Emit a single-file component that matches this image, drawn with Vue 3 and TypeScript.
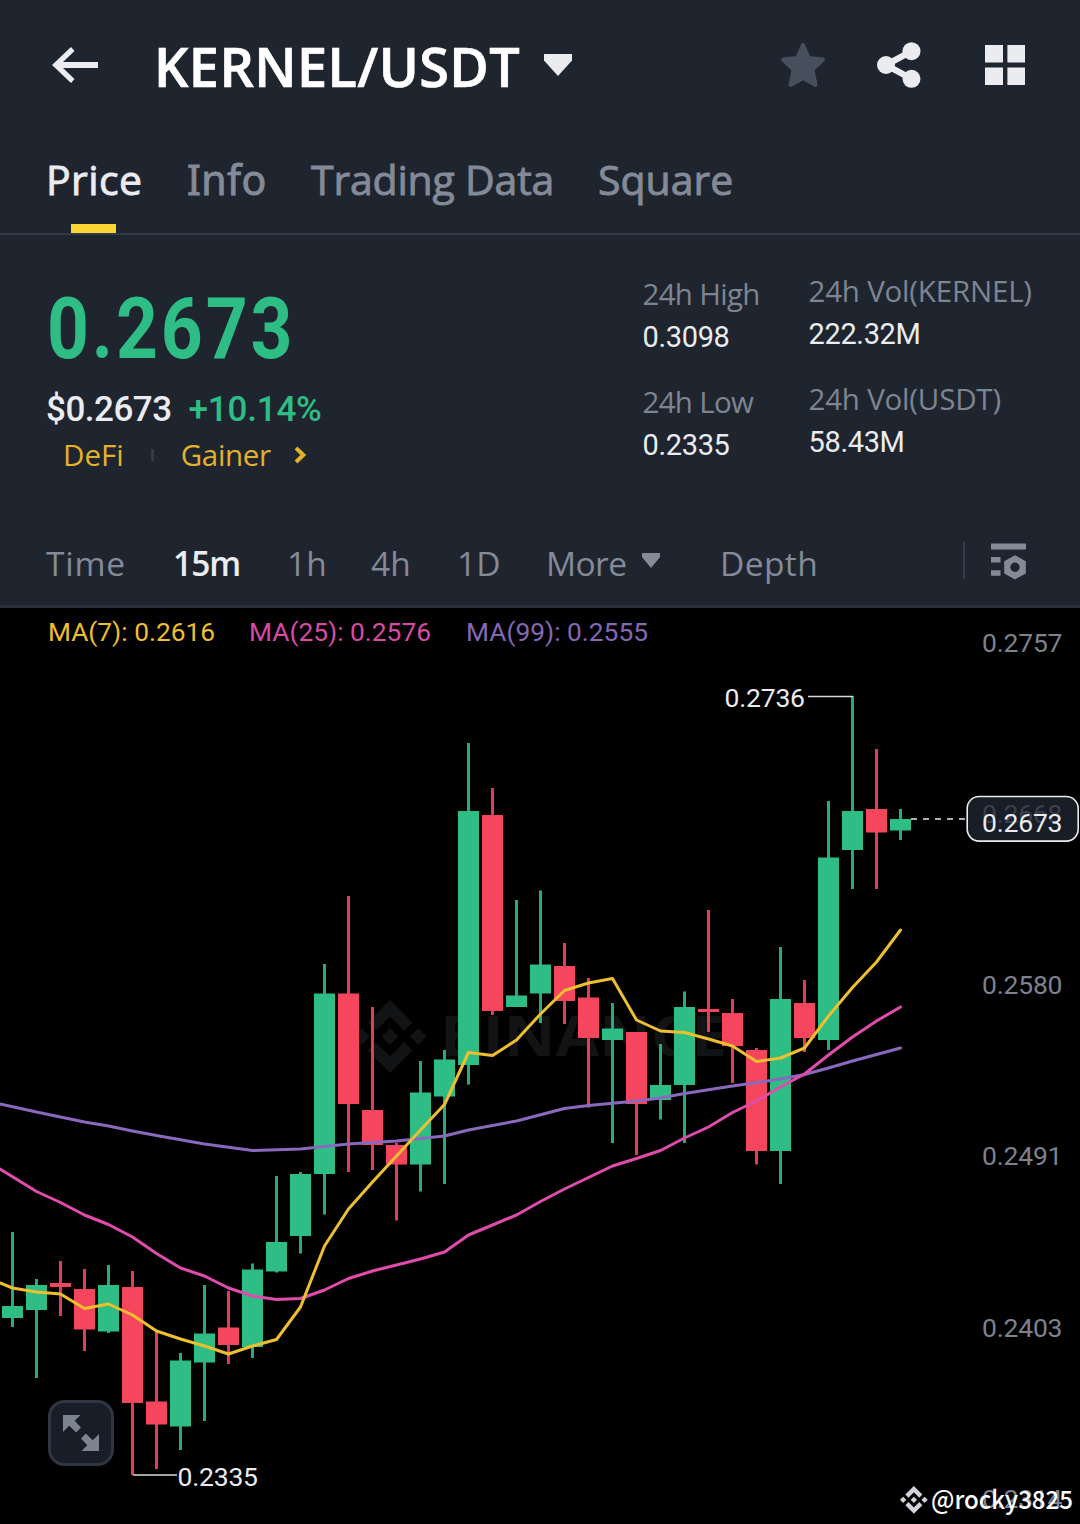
<script setup lang="ts">
interface Candle {
  x: number
  up: boolean
  high: number
  low: number
  top: number
  bottom: number
}

const tabs = [
  { label: 'Price', cls: 'price active' },
  { label: 'Info', cls: 'info' },
  { label: 'Trading Data', cls: 'data' },
  { label: 'Square', cls: 'square' },
]

const stats = [
  [
    { label: '24h High', value: '0.3098' },
    { label: '24h Low', value: '0.2335' },
  ],
  [
    { label: '24h Vol(KERNEL)', value: '222.32M' },
    { label: '24h Vol(USDT)', value: '58.43M' },
  ],
]

// Chart geometry: [rising, high, low, body top, body bottom] in canvas units
const OFFSET = 608
const raw: [number, number, number, number, number][] = [
  [1, 1232, 1327, 1306, 1318],
  [1, 1279, 1378, 1285, 1310],
  [0, 1261, 1316, 1283, 1287],
  [0, 1269, 1351, 1289, 1329.5],
  [1, 1265, 1333, 1285, 1331.5],
  [0, 1271, 1475, 1287, 1403],
  [0, 1332, 1469, 1401.5, 1424.5],
  [1, 1353, 1450, 1360.5, 1426.5],
  [1, 1285, 1421, 1333.5, 1362.5],
  [0, 1291, 1364, 1327.5, 1345],
  [1, 1263.5, 1358, 1269.5, 1347],
  [1, 1176, 1272.5, 1242, 1271.5],
  [1, 1172, 1253.5, 1174, 1236],
  [1, 964, 1214.5, 993.5, 1174],
  [0, 896, 1172, 993.5, 1104],
  [0, 1007, 1170, 1110, 1145],
  [0, 1143, 1220.5, 1145, 1164.5],
  [1, 1061, 1191.5, 1092.5, 1164.5],
  [1, 1050, 1184, 1059.5, 1096.5],
  [1, 743, 1084.5, 811, 1065],
  [0, 788, 1015, 815, 1011],
  [1, 900, 1007, 995.5, 1007],
  [1, 890.5, 1023, 964.5, 993.5],
  [0, 943, 1024, 966, 1001],
  [0, 978, 1107.5, 997.5, 1038],
  [1, 1003, 1143, 1028.5, 1040],
  [0, 1032, 1155, 1032, 1104],
  [1, 1044, 1119.5, 1085, 1100],
  [1, 991.5, 1143, 1007, 1085],
  [0, 910, 1032, 1009, 1012],
  [0, 999, 1083, 1013, 1046],
  [0, 1048, 1164.5, 1050, 1151],
  [1, 947, 1184, 999, 1151],
  [0, 980, 1052, 1003, 1038],
  [1, 801, 1050, 857.5, 1040],
  [1, 696, 889, 811, 850],
  [0, 749, 889, 809, 832.5],
  [1, 809, 840, 819, 830.5],
]
const candles: Candle[] = raw.map(([up, high, low, top, bottom], i) => ({
  x: 12.5 + 24 * i,
  up: up === 1,
  high: high - OFFSET,
  low: low - OFFSET,
  top: top - OFFSET,
  bottom: bottom - OFFSET,
}))

const toPath = (points: number[][]): string =>
  points.map(([x, y]) => `${x},${y - OFFSET}`).join(' ')

const spread = (start: number, values: number[]): number[][] =>
  values.map((y, i) => [start + 24 * i, y])

const ma7 = toPath([
  [0, 1283],
  ...spread(12.5, [
    1288, 1292, 1294, 1308.5, 1304, 1315, 1331, 1339, 1346, 1354, 1346, 1339.5, 1307, 1246, 1209,
    1182, 1156, 1130, 1104.5, 1052.5, 1055.5, 1040, 1014, 990.5, 983, 978.5, 1020, 1031, 1032.5,
    1039, 1046, 1061.5, 1058, 1048, 1016, 987.5, 962, 930,
  ]),
])
const ma25 = toPath([
  [0, 1169],
  ...spread(36.5, [
    1191.5, 1202.5, 1215, 1224.5, 1237, 1253.5, 1268, 1276, 1288, 1296, 1299.5, 1298.5, 1290, 1278.5,
    1271, 1265, 1259, 1252, 1235, 1225, 1215, 1201.5, 1189, 1177.5, 1166, 1158.5, 1150.5, 1138, 1127,
    1112.5, 1101, 1087, 1074, 1055, 1037, 1021, 1007,
  ]),
])
const ma99 = toPath([
  [0, 1104], [36.5, 1112], [84.5, 1122], [108.5, 1126], [132.5, 1131], [156.5, 1135.5], [204.5, 1144],
  [252.5, 1150.5], [300.5, 1149], [324.5, 1146.5], [348.5, 1144], [396.5, 1141], [444.5, 1136],
  [468.5, 1130], [516.5, 1121], [564.5, 1108.5], [588.5, 1105.5], [636.5, 1101], [660.5, 1098],
  [684.5, 1093.5], [732.5, 1086], [780.5, 1079], [804.5, 1074.5], [828.5, 1068], [852.5, 1061],
  [876.5, 1054.5], [900.5, 1048],
])

const axis = [
  { t: '0.2757', y: 44 },
  { t: '0.2580', y: 386 },
  { t: '0.2491', y: 557 },
  { t: '0.2403', y: 729 },
  { t: '0.2314', y: 900 },
]
const averages = [
  { t: 'MA(7): 0.2616', x: 48, w: 167, cls: 'c7' },
  { t: 'MA(25): 0.2576', x: 249, w: 182, cls: 'c25' },
  { t: 'MA(99): 0.2555', x: 466, w: 182, cls: 'c99' },
]

const logo =
  'M38.73,53.2 63.3,28.63 87.89,53.21 102.19,38.91 63.31,0 24.43,38.9Z M0,63.31 14.3,49 28.6,63.31 14.3,77.61Z M38.73,73.41 63.3,98 87.89,73.4 102.2,87.69 63.31,126.61 24.43,87.72Z M98,63.31 112.3,49 126.61,63.3 112.31,77.6Z M77.82,63.3 63.3,48.78 48.78,63.3 63.28,77.8Z'
</script>

<template>
  <div class="screen">
    <header class="topbar">
      <svg class="back" width="46" height="36" viewBox="0 0 46 36">
        <path d="M19 0 0 18 19 36 22.5 32 11 21H46V15H11L22.5 4Z" />
      </svg>
      <h1>KERNEL/USDT</h1>
      <svg class="caret" width="28" height="22" viewBox="0 0 28 22">
        <path d="M0 0H28V6.5L14 22 0 6.5Z" />
      </svg>
      <svg class="star" width="46" height="46" viewBox="0 0 46 46">
        <path d="M23 3 28.8 16 43 17.5 32.4 27.5 35.5 43 23 36 10.5 43 13.6 27.5 3 17.5 17.2 16Z" />
      </svg>
      <svg class="share" width="44" height="46" viewBox="0 0 44 46">
        <path d="M35 9 9 23 35 37" />
        <circle cx="9" cy="23" r="9" />
        <circle cx="34.5" cy="9.2" r="9" />
        <circle cx="34.5" cy="36.8" r="9" />
      </svg>
      <svg class="apps" width="40" height="40" viewBox="0 0 40 40">
        <path d="M0 0H18V17.6H0ZM22.4 0H40V17.6H22.4ZM0 22.4H18V40H0ZM22.4 22.4H40V40H22.4Z" />
      </svg>
    </header>

    <nav class="tabs">
      <a v-for="t in tabs" :key="t.label" class="tab" :class="t.cls">{{ t.label }}</a>
    </nav>

    <section class="summary">
      <div class="quote">
        <div class="last">0.2673</div>
        <div class="sub">
          <span class="fiat">$0.2673</span>
          <span class="gain">+10.14%</span>
        </div>
        <div class="tags">
          <span>DeFi</span>
          <i></i>
          <span class="gainer">Gainer</span>
          <svg width="13" height="18" viewBox="0 0 13 18"><path d="M2 2 9.3 9 2 16" /></svg>
        </div>
      </div>
      <dl v-for="(col, c) in stats" :key="c" class="stats" :class="c ? 'vol' : 'range'">
        <div v-for="s in col" :key="s.label" class="stat">
          <dt>{{ s.label }}</dt>
          <dd>{{ s.value }}</dd>
        </div>
      </dl>
    </section>

    <nav class="intervals">
      <span class="i-time">Time</span>
      <span class="i-15 on">15m</span>
      <span class="i-1h">1h</span>
      <span class="i-4h">4h</span>
      <span class="i-1d">1D</span>
      <span class="i-more">More</span>
      <svg class="drop" width="18" height="15" viewBox="0 0 18 15"><path d="M0 0H18V4L9 15 0 4Z" /></svg>
      <span class="i-depth">Depth</span>
      <i class="rule"></i>
      <svg class="prefs" width="36" height="37" viewBox="0 0 36 37">
        <path d="M0 .5H35V6.5H0ZM0 14H9.5V19.5H0ZM0 27.2H9.5V32.8H0Z" />
        <path
          fill-rule="evenodd"
          d="M24 12.2 34.8 18.2V30.4L24 36.4 13.2 30.4V18.2ZM24 19.6A4.7 4.7 0 1 0 24 29A4.7 4.7 0 1 0 24 19.6Z"
        />
      </svg>
    </nav>

    <main class="chart">
      <svg width="1080" height="916" viewBox="0 0 1080 916">
        <g class="watermark">
          <path :d="logo" transform="translate(353.5 392) scale(.577)" />
          <text x="440" y="448" textLength="287" lengthAdjust="spacingAndGlyphs">BINANCE</text>
        </g>

        <g v-for="c in candles" :key="c.x" :class="c.up ? 'up' : 'down'">
          <rect class="wick" :x="c.x - 1.5" :y="c.high" width="3" :height="c.low - c.high" />
          <rect :x="c.x - 10.5" :y="c.top" width="21" :height="c.bottom - c.top" />
        </g>

        <g class="lines">
          <polyline class="l99" :points="ma99" />
          <polyline class="l25" :points="ma25" />
          <polyline class="l7" :points="ma7" />
        </g>

        <text
          v-for="a in averages"
          :key="a.t"
          :class="a.cls"
          :x="a.x"
          y="33"
          :textLength="a.w"
          lengthAdjust="spacingAndGlyphs"
        >{{ a.t }}</text>

        <text v-for="a in axis" :key="a.t" class="axis" x="982" :y="a.y" textLength="80.5">{{ a.t }}</text>

        <path class="pointer" d="M808 88.5H853M133 867H177" />
        <text class="mark" x="724.5" y="99" textLength="80.5">0.2736</text>
        <text class="mark" x="177.5" y="878" textLength="80.5">0.2335</text>

        <path class="dash" d="M911 211H966" />
        <rect class="bubble" x="967.2" y="188.5" width="111" height="44.6" rx="12" />
        <text class="ghost" x="982" y="215" textLength="80.5">0.2668</text>
        <text class="mark" x="982" y="224" textLength="80.5">0.2673</text>

        <g class="expand">
          <rect x="49.5" y="793.5" width="63" height="63" rx="15" />
          <path d="M63 807H80.5L74.7 812.8 81 819.5 76.2 824.5 69.2 817.8 63 824Z" />
          <path d="M99 843H81.5L87.3 837.2 81 830.5 85.8 825.5 92.8 832.2 99 826Z" />
        </g>

        <g class="author">
          <path :d="logo" transform="translate(900 878) scale(.219)" />
          <text x="931" y="901" textLength="142" lengthAdjust="spacingAndGlyphs">@rocky3825</text>
        </g>
      </svg>
    </main>
  </div>
</template>

<style>
body {
  margin: 0;
  background: #000;
}
</style>

<style scoped>
.screen {
  width: 1080px;
  height: 1524px;
  overflow: hidden;
  background: #1f252f;
  color: #eaecef;
  font-family: 'Open Sans', 'Noto Sans', sans-serif;
}
svg {
  display: block;
  flex: none;
}
.topbar {
  display: flex;
  align-items: center;
  box-sizing: border-box;
  width: 1080px;
  height: 130px;
  padding: 0 55px 0 52px;
  fill: #eaecef;
}
h1 {
  flex: none;
  width: 386px;
  margin: 2px 0 0 56px;
  font-size: 54px;
  font-weight: 600;
  line-height: 70px;
  letter-spacing: 0.4px;
  color: #fff;
  white-space: nowrap;
  -webkit-text-stroke: 0.7px #fff;
}
.caret {
  margin-left: 4px;
}
.star {
  margin-left: auto;
  fill: #474f5d;
  stroke: #474f5d;
  stroke-width: 4;
  stroke-linejoin: round;
}
.share {
  margin-left: 51px;
}
.share path {
  fill: none;
  stroke: #eaecef;
  stroke-width: 6.5;
}
.apps {
  margin-left: 64px;
}
.tabs {
  display: flex;
  height: 103px;
  padding-left: 46px;
  border-bottom: 2px solid #333a45;
  font-size: 41px;
  font-weight: 400;
  line-height: 98px;
  color: #848a98;
  white-space: nowrap;
}
.tab {
  height: 103px;
  -webkit-text-stroke: 0.9px currentColor;
}
.price {
  width: 95px;
  margin-right: 46px;
  letter-spacing: 0.4px;
  color: #eaecef;
  background: linear-gradient(#fcd535, #fcd535) 25px 94px / 45px 9px no-repeat;
}
.info {
  width: 124px;
  font-family: 'Noto Sans', sans-serif;
  letter-spacing: 0.4px;
}
.data {
  width: 287px;
  letter-spacing: -0.2px;
}
.summary {
  display: flex;
  height: 285px;
}
.quote {
  width: 597px;
  padding-left: 46px;
  box-sizing: border-box;
}
.last {
  width: 300px;
  margin: 44px 0 0 1px;
  font: 700 85px/100px Roboto, sans-serif;
  letter-spacing: 3.4px;
  color: #2ebd85;
  transform: scaleX(0.86);
  transform-origin: left;
}
.sub {
  display: flex;
  gap: 17px;
  margin-top: 8px;
  font: 500 35px/46px Roboto, sans-serif;
}
.fiat {
  letter-spacing: -0.5px;
}
.gain {
  letter-spacing: -0.2px;
  color: #2ebd85;
}
.tags {
  display: flex;
  align-items: center;
  margin: 3px 0 0 17px;
  font-size: 29.5px;
  line-height: 38px;
  color: #e4b22a;
}
.tags i {
  width: 3px;
  height: 12px;
  margin: 0 27px;
  background: #353c48;
}
.gainer {
  letter-spacing: -0.3px;
}
.tags svg {
  margin-left: 23px;
  fill: none;
  stroke: #e4b22a;
  stroke-width: 4;
}
.stats {
  margin: 0;
  width: 166px;
  padding: 41px 0 0 45.5px;
  white-space: nowrap;
}
.range {
  width: 120.5px;
}
.vol {
  padding-top: 38px;
}
.stat {
  height: 108px;
}
dt {
  font-size: 29.5px;
  line-height: 36px;
  letter-spacing: -0.2px;
  color: #7d8492;
}
.range dt {
  letter-spacing: -0.7px;
}
dd {
  margin: 0;
  padding-top: 5px;
  font: 400 29px/40px Roboto, sans-serif;
  letter-spacing: -0.35px;
}
.intervals {
  display: flex;
  align-items: center;
  box-sizing: border-box;
  height: 88px;
  padding: 0 54px 0 46px;
  border-bottom: 3px solid #2a313c;
  font-size: 33.5px;
  line-height: 48px;
  color: #848a98;
}
.intervals span {
  white-space: nowrap;
}
.i-time { width: 127px; letter-spacing: 0.8px; }
.i-15 { width: 114px; letter-spacing: -1px; }
.i-1h { width: 84px; }
.i-4h { width: 86px; }
.i-1d { width: 89px; }
.i-more { width: 96px; letter-spacing: -0.6px; }
.i-depth { width: 243px; margin-left: 60px; letter-spacing: 0.4px; }
.on {
  color: #eaecef;
  font-weight: 600;
}
.drop {
  margin-bottom: 5px;
  fill: #848a98;
}
.rule {
  width: 2px;
  height: 37px;
  margin-bottom: 5px;
  background: #363c48;
}
.prefs {
  margin: 0 -1px 3px auto;
  fill: #848a98;
}
.chart {
  height: 916px;
  background: #000;
}
.chart text {
  font: 400 26.5px Roboto, sans-serif;
}
.chart .watermark {
  fill: #111315;
}
.chart .watermark text {
  font: 700 56px 'Open Sans', sans-serif;
}
.up { fill: #2ebd85; }
.down { fill: #f6465d; }
.wick { opacity: 0.9; }
.lines {
  fill: none;
  stroke-width: 3;
  stroke-linejoin: round;
  stroke-linecap: round;
}
.l7 { stroke: #eebf2f; }
.l25 { stroke: #e04cab; }
.l99 { stroke: #8a68bd; }
.c7 { fill: #eebf2f; }
.c25 { fill: #d84ba5; }
.c99 { fill: #8468b5; }
.axis { fill: #7d828e; }
.mark { fill: #eaecef; }
.pointer {
  stroke: #d8dade;
  stroke-width: 1.6;
}
.dash {
  stroke: #eaecef;
  stroke-width: 1.7;
  stroke-dasharray: 6 6;
}
.bubble {
  fill: #181d27;
  stroke: #eaecef;
  stroke-width: 1.6;
}
.ghost { fill: #3a3f4a; }
.expand { fill: #7b8391; }
.expand rect {
  fill: #181d27;
  stroke: #2f3641;
  stroke-width: 3;
}
.author { fill: #d0d3d9; }
.chart .author text {
  font: 500 25px 'Noto Sans CJK SC', 'Noto Sans', sans-serif;
  fill: #fff;
}
</style>
